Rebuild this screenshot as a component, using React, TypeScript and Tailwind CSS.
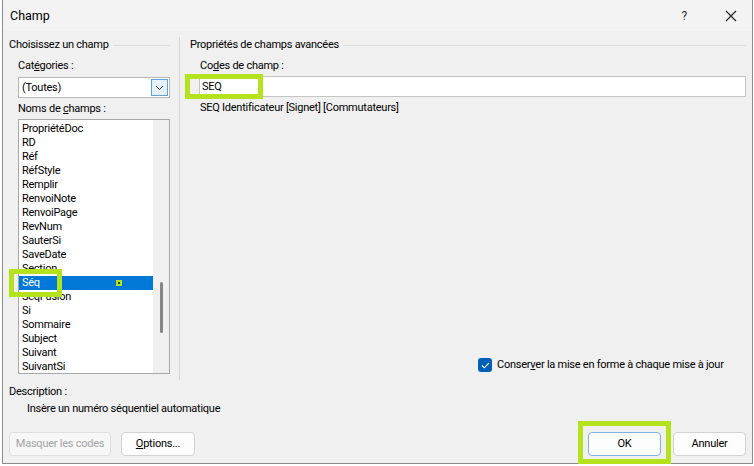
import React from 'react';

const fields = [
    'PropriétéDoc', 'RD', 'Réf', 'RéfStyle', 'Remplir', 'RenvoiNote', 'RenvoiPage', 'RevNum',
    'SauterSi', 'SaveDate', 'Section', 'Séq', 'SéqFusion', 'Si', 'Sommaire', 'Subject', 'Suivant', 'SuivantSi',
];

const GroupHeader: React.FC<{ label: string }> = ({ label }) => (
    <div className="flex items-center h-[16px]">
        <span className="whitespace-nowrap">{label}</span>
        <div className="flex-1 h-px bg-[#dcdcdc] ml-[4px]" />
    </div>
);

const Button: React.FC<{ children: React.ReactNode; className?: string }> = ({ children, className }) => (
    <div className={`h-[24px] flex items-center justify-center rounded-[4px] border whitespace-nowrap ${className}`}>
        {children}
    </div>
);

const App: React.FC = () => {
    return (
        <div className="w-[754px] h-[466px] bg-white pl-[2px] text-[11px] tracking-[-0.25px] text-black font-['Roboto',sans-serif] leading-[16px] overflow-hidden">
            <div className="w-[751px] h-[464px] border border-t-0 border-[#8c8c8c] bg-[#f0f0f0] flex flex-col relative">
                {/* title bar */}
                <div className="h-[31px] bg-[#f3f3f3] flex items-center pl-[7px] shrink-0">
                    <span className="text-[12.5px] tracking-normal text-black">Champ</span>
                    <div className="flex-1" />
                    <span className="text-[12px] text-[#333] mr-[38px]">?</span>
                    <svg width="12" height="12" viewBox="0 0 12 12" className="mr-[15px]">
                        <path d="M1 1 L11 11 M11 1 L1 11" stroke="#222" strokeWidth="1.1" />
                    </svg>
                </div>

                {/* main area */}
                <div className="flex pt-[6px] h-[349px] shrink-0">
                    {/* left column */}
                    <div className="ml-[6px] w-[161px] flex flex-col">
                        <GroupHeader label="Choisissez un champ" />
                        <div className="pl-[9px] flex flex-col">
                            <div className="mt-[5px]">Cat<u>é</u>gories :</div>
                            <div className="mt-[3px] h-[21px] bg-white border border-[#b9b9b9] flex items-center pl-[3px] relative">
                                <span>(Toutes)</span>
                                <div className="absolute right-[1px] top-[1px] w-[17px] h-[17px] bg-[#e5f1fb] border border-[#5fa2dd] flex items-center justify-center">
                                    <svg width="9" height="6" viewBox="0 0 9 6">
                                        <path d="M1 1 L4.5 4.5 L8 1" fill="none" stroke="#444" strokeWidth="1" />
                                    </svg>
                                </div>
                            </div>
                            <div className="mt-[3px]">Noms de <u>c</u>hamps :</div>
                            <div className="mt-[2px] h-[255px] bg-white border border-[#a8a8a8] flex overflow-hidden">
                                <div className="flex-1 pt-[2px] leading-[14px]">
                                    {fields.map((f) => (
                                        <div
                                            key={f}
                                            className={
                                                f === 'Séq'
                                                    ? 'h-[14px] pl-[3px] bg-[#0078d7] text-white relative'
                                                    : 'h-[14px] pl-[3px]'
                                            }
                                        >
                                            {f}
                                            {f === 'Séq' && (
                                                <div className="absolute left-[97px] top-[4px] w-[6px] h-[6px] bg-[#b4e21c] flex items-center justify-center">
                                                    <div className="w-[2px] h-[2px] bg-[#2a4a10]" />
                                                </div>
                                            )}
                                        </div>
                                    ))}
                                </div>
                                <div className="w-[16px] bg-[#f0f0f0] flex justify-center">
                                    <div className="w-[3px] h-[51px] mt-[162px] rounded-full bg-[#868686]" />
                                </div>
                            </div>
                        </div>
                    </div>

                    {/* separator */}
                    <div className="ml-[9px] w-px bg-[#d4d4d4]" />

                    {/* right column */}
                    <div className="ml-[10px] w-[556px] flex flex-col pb-[7px]">
                        <GroupHeader label="Propriétés de champs avancées" />
                        <div className="pl-[9px] flex flex-col flex-1">
                            <div className="mt-[5px] pl-[1px]">Co<u>d</u>es de champ :</div>
                            <div className="mt-[2px] h-[21px] bg-white border border-[#c4c4c4] flex items-center pl-[2px]">
                                SEQ
                            </div>
                            <div className="mt-[3px] pl-[1px]">SEQ Identificateur [Signet] [Commutateurs]</div>
                            <div className="flex-1" />
                            <div className="flex items-center ml-[279px]">
                                <div className="w-[14px] h-[14px] rounded-[3px] bg-[#005fb8] flex items-center justify-center">
                                    <svg width="9" height="7" viewBox="0 0 9 7">
                                        <path d="M1 3.5 L3.3 5.8 L8 1" fill="none" stroke="white" strokeWidth="1.1" />
                                    </svg>
                                </div>
                                <span className="ml-[5px] whitespace-nowrap">Conser<u>v</u>er la mise en forme à chaque mise à jour</span>
                            </div>
                        </div>
                    </div>
                </div>

                {/* description */}
                <div className="pl-[6px] mt-[4px]">Description :</div>
                <div className="pl-[24px] mt-[1px]">Insère un numéro séquentiel automatique</div>

                {/* footer */}
                <div className="flex items-center mt-[15px] pl-[6px] pr-[6px]">
                    <Button className="w-[102px] bg-[#f7f7f7] border-[#e0e0e0] text-[#a3a3a3]">Masquer les codes</Button>
                    <Button className="w-[74px] ml-[10px] bg-[#fdfdfd] border-[#d2d2d2]">
                        <span><u>O</u>ptions...</span>
                    </Button>
                    <div className="flex-1" />
                    <Button className="w-[73px] bg-[#fdfdfd] border-[#7fb1e3]">OK</Button>
                    <Button className="w-[73px] ml-[12px] bg-[#fdfdfd] border-[#d2d2d2]">Annuler</Button>
                </div>

                {/* green highlight boxes */}
                <div className="absolute left-[6px] top-[269px] w-[53px] h-[28px] border-[5px] border-[#b4e21c]" />
                <div className="absolute left-[182px] top-[74px] w-[78px] h-[25px] border-[5px] border-[#b4e21c]" />
                <div className="absolute left-[575px] top-[421px] w-[93px] h-[43px] border-[5px] border-[#b4e21c]" />
            </div>
        </div>
    );
};

export default App;
